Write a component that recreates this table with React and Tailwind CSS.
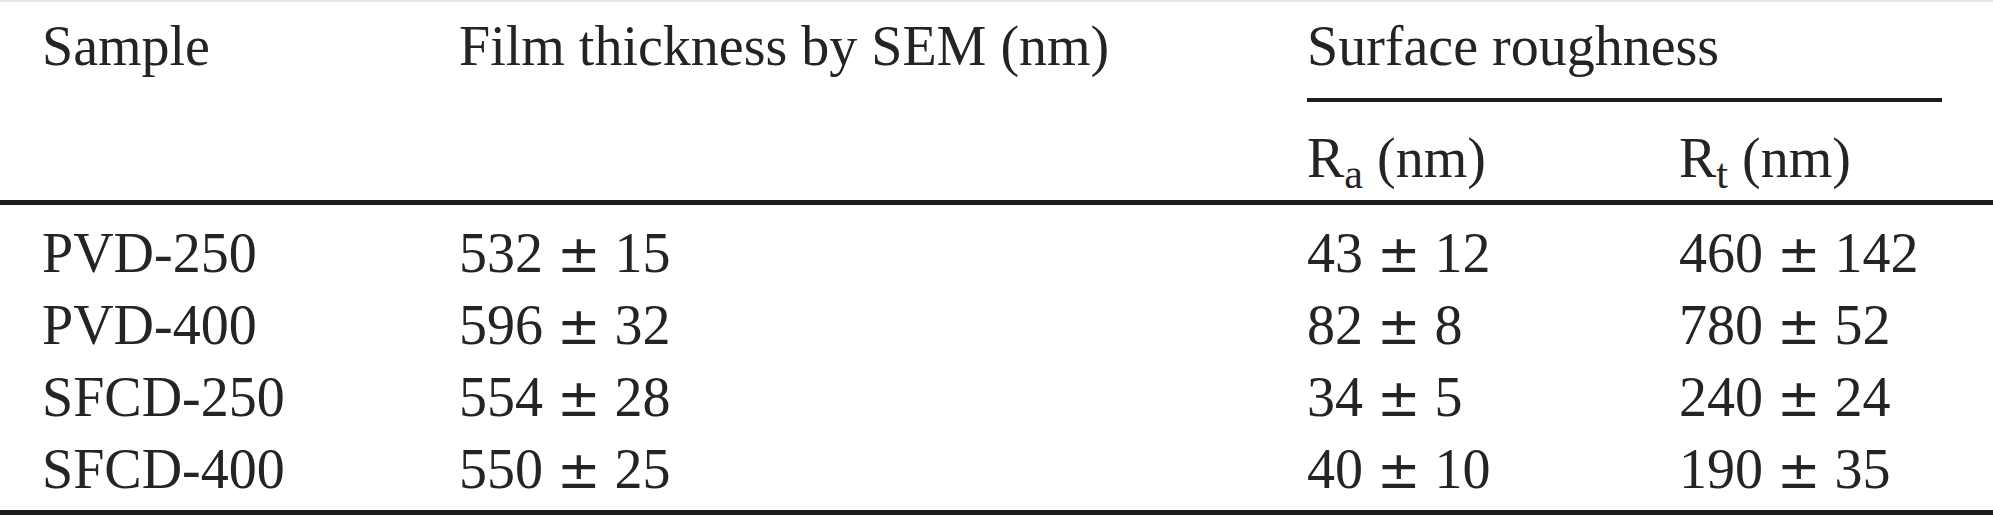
const ROWS = [
  { sample: "PVD-250", thick: ["532", "15"], ra: ["43", "12"], rt: ["460", "142"] },
  { sample: "PVD-400", thick: ["596", "32"], ra: ["82", "8"], rt: ["780", "52"] },
  { sample: "SFCD-250", thick: ["554", "28"], ra: ["34", "5"], rt: ["240", "24"] },
  { sample: "SFCD-400", thick: ["550", "25"], ra: ["40", "10"], rt: ["190", "35"] },
];

// value ± error, the ± drawn wider like the journal's typeface
function PM({ v }) {
  return (
    <>
      {v[0]} <span className="font-['DejaVu_Sans',sans-serif] text-[52px]">±</span> {v[1]}
    </>
  );
}

// Column widths: sample col starts at 42px, film col at 459, Ra at 1307, Rt at 1679.
export default function App() {
  return (
    <div className="h-[515px] w-[1993px] overflow-hidden bg-white font-['Liberation_Serif',serif] text-[56px] leading-[56px] text-[#262324]">
      <div className="border-t-2 border-[#e6e6e6]">
        {/* header */}
        <div className="flex">
          <div className="w-[459px] shrink-0 pl-[42px] pt-4">Sample</div>
          <div className="w-[848px] shrink-0 pt-4">Film thickness by SEM (nm)</div>
          <div className="w-[635px] shrink-0">
            <div className="border-b-4 border-[#1d1d1d] pb-6 pt-4">Surface roughness</div>
            <div className="flex pb-[14px] pt-[28px]">
              <div className="w-[372px] shrink-0">
                R<sub>a</sub> (nm)
              </div>
              <div>
                R<sub>t</sub> (nm)
              </div>
            </div>
          </div>
        </div>

        <div className="h-[5px] bg-[#1d1d1d]" />

        {/* body */}
        <div className="pb-[5px] pt-3">
          {ROWS.map((r) => (
            <div key={r.sample} className="flex h-[72px] items-center leading-[72px]">
              <div className="w-[459px] shrink-0 pl-[42px]">{r.sample}</div>
              <div className="w-[848px] shrink-0"><PM v={r.thick} /></div>
              <div className="w-[372px] shrink-0"><PM v={r.ra} /></div>
              <div><PM v={r.rt} /></div>
            </div>
          ))}
        </div>

        <div className="h-[5px] bg-[#1d1d1d]" />
      </div>
    </div>
  );
}
